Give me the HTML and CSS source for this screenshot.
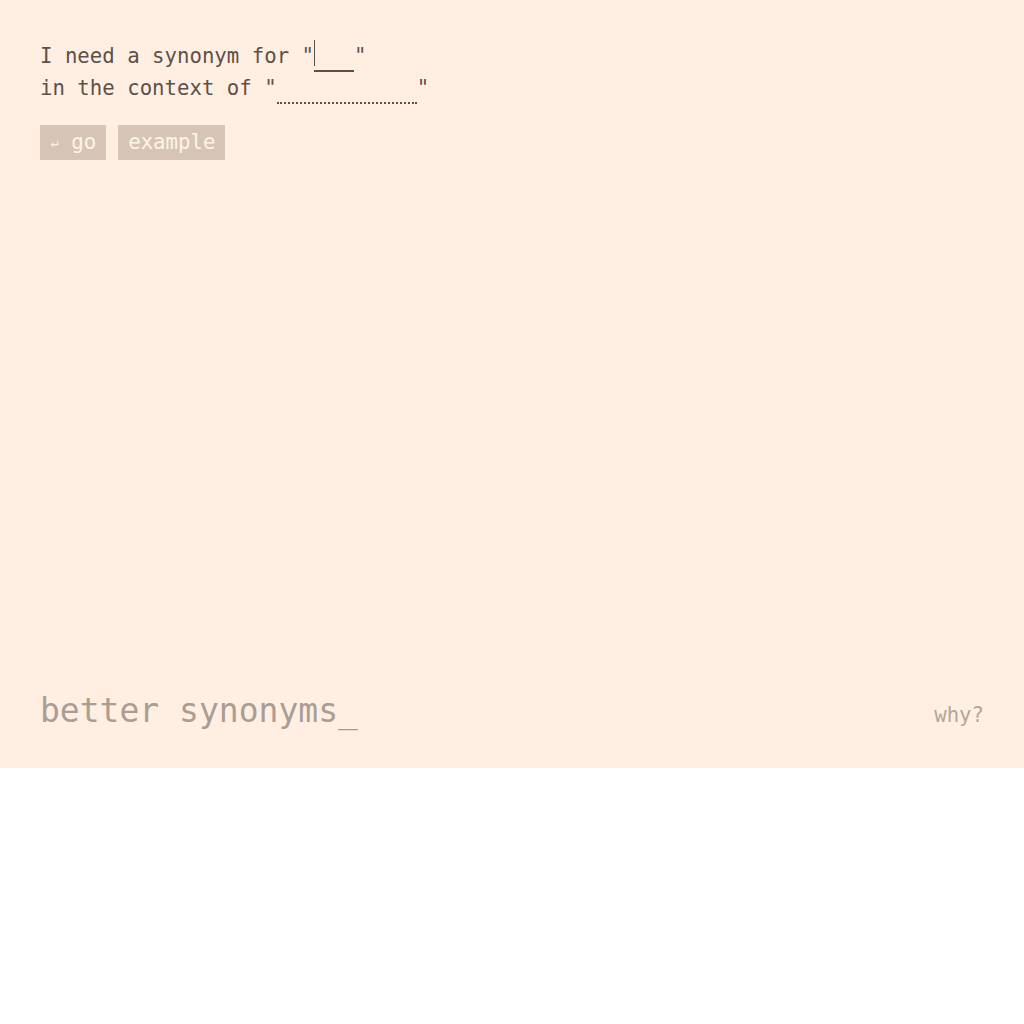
FILE: index.html
```html
<!DOCTYPE html>
<html>
<head>
<meta charset="utf-8">
<link rel="stylesheet" href="styles.css">
</head>
<body>
<main class="page">
  <section class="query">
    <div class="line">I need a synonym for "<span class="field"><input class="word" type="text"><span class="caret"></span></span>"</div>
    <div class="line">in the context of "<input class="context" type="text">"</div>
    <div class="actions">
      <button class="btn"><span class="enter">↵</span> go</button>
      <button class="btn">example</button>
    </div>
  </section>
  <footer class="footer">
    <div class="title">better synonyms_</div>
    <a class="why">why?</a>
  </footer>
</main>
</body>
</html>
```
FILE: styles.css
```css
html, body {
  margin: 0;
  padding: 0;
  background: #ffffff;
}
.page {
  box-sizing: border-box;
  height: 768px;
  background: #ffefe3;
  padding: 40px 40px 38px 40px;
  display: flex;
  flex-direction: column;
  justify-content: space-between;
  font-family: "DejaVu Sans Mono", "Liberation Mono", monospace;
  color: #5e5047;
}
.line {
  font-size: 20.7px;
  line-height: 32px;
  height: 32px;
  white-space: pre;
}
.field {
  position: relative;
  display: inline-block;
}
input {
  font: inherit;
  color: inherit;
  background: transparent;
  border: none;
  outline: none;
  padding: 0 0 4px 0;
  margin: 0;
  height: 20px;
  line-height: 20px;
  vertical-align: baseline;
}
.word {
  width: 40px;
  border-bottom: 2px solid #5e5047;
}
.caret {
  position: absolute;
  left: 0;
  top: 0;
  width: 1px;
  height: 26px;
  background: #5e5047;
}
.context {
  width: 140px;
  border-bottom: 2px dotted #5e5047;
}
.actions {
  display: flex;
  gap: 12px;
  margin-top: 21px;
}
.btn {
  font-family: "DejaVu Sans Mono", "Liberation Mono", monospace;
  font-size: 20.7px;
  height: 35px;
  padding: 0 10px;
  border: none;
  background: #d6c5b7;
  color: #fff4e8;
  line-height: 35px;
}
.enter {
  font-size: 13px;
  vertical-align: 2px;
  margin-left: 1px;
}
.footer {
  display: flex;
  justify-content: space-between;
  align-items: baseline;
}
.title {
  font-size: 33px;
  color: #aa9d93;
}
.why {
  font-size: 20.7px;
  color: #b3a69c;
}
```
